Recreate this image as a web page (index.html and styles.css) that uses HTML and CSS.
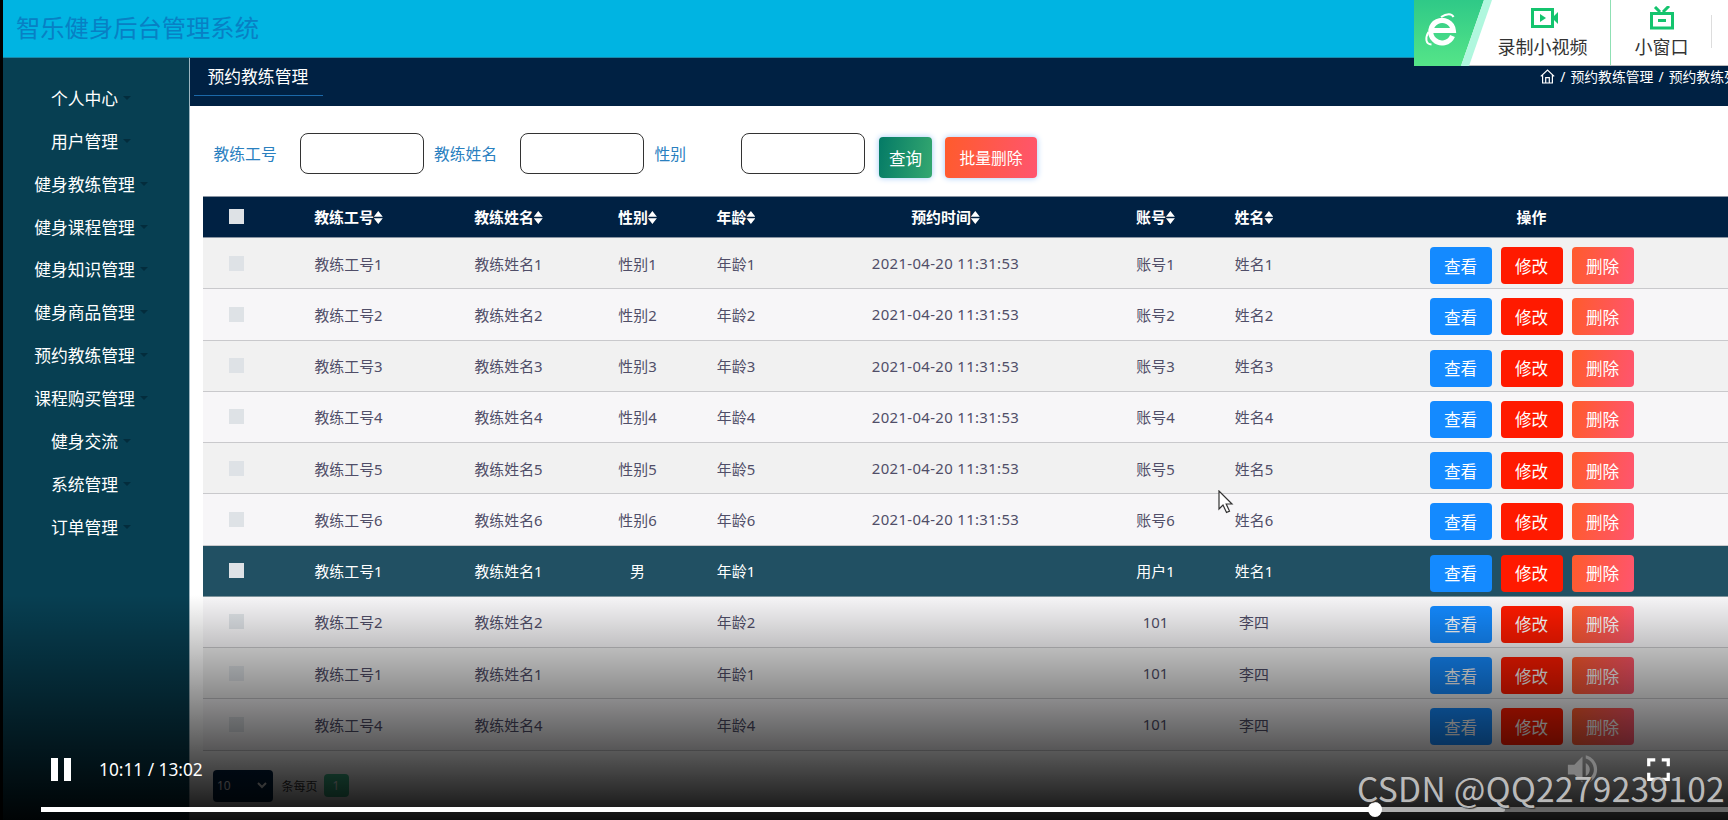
FILE: index.html
```html
<!DOCTYPE html>
<html lang="zh-CN">
<head>
    <meta charset="UTF-8">
    <title>智乐健身后台管理系统</title>
    <link rel="stylesheet" href="styles.css">
</head>
<body>
    <header class="navbar">智乐健身后台管理系统</header>

    <div class="wrapper">
        <nav class="sidebar">
            <a class="menu-item">个人中心</a>
            <a class="menu-item">用户管理</a>
            <a class="menu-item">健身教练管理</a>
            <a class="menu-item">健身课程管理</a>
            <a class="menu-item">健身知识管理</a>
            <a class="menu-item">健身商品管理</a>
            <a class="menu-item">预约教练管理</a>
            <a class="menu-item">课程购买管理</a>
            <a class="menu-item">健身交流</a>
            <a class="menu-item">系统管理</a>
            <a class="menu-item">订单管理</a>
        </nav>

        <main class="content">
            <div class="page-title">
                <h3>预约教练管理</h3>
                <div class="breadcrumb">
                    <svg width="15" height="15" viewBox="0 0 15 15" fill="none" stroke="#fff" stroke-width="1.2"><path d="M.8 7.4 7.5 1l6.7 6.4M2.6 6v8h9.8V6M5.7 14V8.6h3.6V14"/></svg>
                    <span class="sep">/</span><span>预约教练管理</span><span class="sep">/</span><span>预约教练列表</span>
                </div>
            </div>

            <div class="search-form">
                <label>教练工号</label><input type="text">
                <label>教练姓名</label><input type="text">
                <label>性别</label><input type="text">
                <button class="btn-search">查询</button>
                <button class="btn-batch">批量删除</button>
            </div>

            <table class="data-table">
                <colgroup>
                    <col class="c-check"><col class="c-no"><col class="c-name"><col class="c-sex"><col class="c-age">
                    <col class="c-time"><col class="c-account"><col class="c-user"><col class="c-action">
                </colgroup>
                <thead>
                    <tr>
                        <th><i class="check"></i></th>
                        <th class="sort">教练工号</th>
                        <th class="sort">教练姓名</th>
                        <th class="sort">性别</th>
                        <th class="sort">年龄</th>
                        <th class="sort">预约时间</th>
                        <th class="sort">账号</th>
                        <th class="sort">姓名</th>
                        <th>操作</th>
                    </tr>
                </thead>
                <tbody id="tableBody"></tbody>
            </table>

            <div class="pager">
                <div class="page-size">10
                    <svg width="10" height="7" viewBox="0 0 10 7" fill="none" stroke="#fff" stroke-width="2"><path d="M1 1l4 4 4-4"/></svg>
                </div>
                <span>条每页</span>
                <b class="page-num">1</b>
            </div>
        </main>
    </div>

    <!-- 浏览器录制工具条 -->
    <div class="recorder">
        <svg class="brand" width="80" height="66" viewBox="0 0 80 66">
            <defs>
                <linearGradient id="g" x1="0" y1="0" x2="0" y2="1"><stop offset="0" stop-color="#2fc987"/><stop offset="1" stop-color="#55e588"/></linearGradient>
            </defs>
            <path d="M0 0h70L47 66H0z" fill="url(#g)"/>
            <path d="M70 0h8L55 66h-8z" fill="#b0f7de"/>
            <path d="M38.500 36A11.300 11.300 0 1 1 39.300 30.500H18" fill="none" stroke="#fff" stroke-width="5.200"/>
            <path d="M27 17c6-4 11-3.500 12.500 0M14.500 32c-3.500 6-3 12 3 12.500" fill="none" stroke="#fff" stroke-width="2"/>
        </svg>
        <div class="tool tool-video">
            <svg width="28" height="20" viewBox="0 0 28 20"><path d="M1.500 1.500h20v17h-20z" fill="none" stroke="#14c46e" stroke-width="3"/><path d="M9 6v8l6-4zM23 8l4-4v12l-4-4z" fill="#14c46e"/></svg>
            <span>录制小视频</span>
        </div>
        <div class="tool tool-window">
            <svg width="26" height="24" viewBox="0 0 26 24" fill="none" stroke="#14c46e" stroke-width="3"><path d="M2.500 7.500h21v14.500h-21zM9 14.500h8M6 1l5 5M20 0l-6 6"/></svg>
            <span>小窗口</span>
        </div>
    </div>

    <svg class="cursor" width="16" height="24" viewBox="0 0 16 24"><path d="M1 1v18l4-4 3.500 7.500 3-1.400L8.200 14H14z" fill="#fff" stroke="#333" stroke-width="1.200"/></svg>

    <!-- 播放器控制栏 -->
    <div class="player">
        <div class="controls">
            <i class="pause"></i>
            <span class="time">10:11 / 13:02</span>
            <svg class="volume" width="39" height="39" viewBox="0 0 24 24" fill="#808080"><path d="M3 9v6h4l5 5V4L7 9H3zm13.500 3c0-1.770-1.020-3.290-2.500-4.030v8.050c1.480-.73 2.500-2.250 2.500-4.020zM14 3.230v2.060c2.890.86 5 3.540 5 6.710s-2.110 5.850-5 6.710v2.060c4.010-.91 7-4.490 7-8.770s-2.990-7.860-7-8.770z"/></svg>
            <svg class="full" width="39" height="39" viewBox="0 0 24 24" fill="#fff"><path d="M7 14H5v5h5v-2H7v-3zm-2-4h2V7h3V5H5v5zm12 7h-3v2h5v-5h-2v3zM14 5v2h3v3h2V5h-5z"/></svg>
        </div>
        <div class="progress"><div class="played"></div><div class="buffered"></div></div>
    </div>
    <div class="watermark">CSDN @QQ2279239102</div>

    <script>
        const time = '2021-04-20 11:31:53';
        const rows = [
            ['教练工号1', '教练姓名1', '性别1', '年龄1', time, '账号1', '姓名1'],
            ['教练工号2', '教练姓名2', '性别2', '年龄2', time, '账号2', '姓名2'],
            ['教练工号3', '教练姓名3', '性别3', '年龄3', time, '账号3', '姓名3'],
            ['教练工号4', '教练姓名4', '性别4', '年龄4', time, '账号4', '姓名4'],
            ['教练工号5', '教练姓名5', '性别5', '年龄5', time, '账号5', '姓名5'],
            ['教练工号6', '教练姓名6', '性别6', '年龄6', time, '账号6', '姓名6'],
            ['教练工号1', '教练姓名1', '男', '年龄1', '', '用户1', '姓名1'],
            ['教练工号2', '教练姓名2', '', '年龄2', '', '101', '李四'],
            ['教练工号1', '教练姓名1', '', '年龄1', '', '101', '李四'],
            ['教练工号4', '教练姓名4', '', '年龄4', '', '101', '李四']
        ];

        document.getElementById('tableBody').innerHTML = rows.map((row, i) => `
            <tr class="${i === 6 ? 'active' : ''}">
                <td><i class="check"></i></td>
                ${row.map(cell => `<td>${cell}</td>`).join('')}
                <td>
                    <div class="actions">
                        <button class="btn-view">查看</button>
                        <button class="btn-edit">修改</button>
                        <button class="btn-delete">删除</button>
                    </div>
                </td>
            </tr>
        `).join('');
    </script>
</body>
</html>
```
FILE: styles.css
```css
* {
    box-sizing: border-box;
}
body {
    margin: 0;
    width: 1728px;
    height: 820px;
    overflow: hidden;
    position: relative;
    border-left: 3px solid #000;
    background-color: #fff;
    font-family: "Noto Sans", "Noto Sans CJK SC", sans-serif;
    color: #504e68;
}
button {
    border: none;
    padding: 0;
    font-family: inherit;
    color: #fff;
}
.navbar {
    height: 58px;
    padding-left: 13px;
    line-height: 56px;
    font-size: 24.3px;
    color: #0880c4;
    background-color: #00b4e2;
    border-bottom: 1px solid #1b87a8;
}
.wrapper {
    display: flex;
    height: 762px;
}
.sidebar {
    width: 187px;
    flex-shrink: 0;
    padding: 18.5px 10px 0 0;
    background-color: #073f52;
    border-right: 1px solid #9db6c0;
}
.menu-item {
    display: flex;
    align-items: center;
    justify-content: center;
    height: 42.87px;
    font-size: 16.8px;
    color: #fff;
}
.menu-item::after {
    content: "";
    margin-left: 5px;
    border: 4.500px solid transparent;
    border-top-color: #032c3c;
    border-bottom: 0;
}
.content {
    flex: 1;
    min-width: 0;
    overflow: hidden;
}
.page-title {
    display: flex;
    justify-content: space-between;
    height: 48px;
    padding-left: 4px;
    background-color: #002143;
    color: #fff;
}
.page-title h3 {
    width: 129px;
    height: 38px;
    margin: 0;
    padding-left: 13.500px;
    line-height: 38px;
    font-size: 16.8px;
    font-weight: normal;
    border-bottom: 1px solid #1b68a8;
}
.breadcrumb {
    display: flex;
    align-items: center;
    width: 188px;
    height: 36px;
    font-size: 13.8px;
    white-space: nowrap;
}
.breadcrumb .sep {
    width: 15.500px;
    text-align: center;
    flex-shrink: 0;
}
.breadcrumb svg {
    flex-shrink: 0;
}
.search-form {
    display: flex;
    align-items: center;
    height: 90px;
    padding: 5px 0 0 23.500px;
}
.search-form label {
    width: 86px;
    font-size: 15.8px;
    color: #2a80bf;
}
.search-form input {
    width: 124px;
    height: 41px;
    margin-right: 10.500px;
    border: 1px solid #333;
    border-radius: 8px;
}
.search-form button {
    height: 41px;
    margin-top: 8px;
    border-radius: 4px;
    box-shadow: 0 0 6px #a0c8f8;
}
.btn-search {
    width: 53px;
    margin-left: 4px;
    font-size: 16.5px;
    background: linear-gradient(100deg, #047a66, #35a870);
}
.search-form .btn-batch {
    width: 92px;
    margin-left: 13px;
    font-size: 15.8px;
}
.btn-batch, .btn-delete {
    background: linear-gradient(100deg, #ff5b2c, #ff556f);
}
.data-table {
    width: 1559px;
    margin-left: 13px;
    table-layout: fixed;
    border-collapse: separate;
    border-spacing: 0;
    font-size: 14.9px;
    text-align: center;
}
.c-check { width: 67px; }
.c-no { width: 157px; }
.c-name { width: 163px; }
.c-sex { width: 95px; }
.c-age { width: 102px; }
.c-time { width: 317px; }
.c-account { width: 103px; }
.c-user { width: 94px; }
.c-action { width: 461px; }
th, td {
    padding: 0;
    white-space: nowrap;
}
th {
    height: 42px;
    padding-bottom: 2px;
    color: #fff;
    background-color: #002143;
    border-top: 1px solid #8994a2;
    border-bottom: 1px solid #8994a2;
}
.sort::after {
    content: "";
    display: inline-block;
    width: 9px;
    height: 13px;
    vertical-align: -1.500px;
    background-color: #fff;
    clip-path: polygon(50% 0, 100% 44%, 0 44%, 0 56%, 100% 56%, 50% 100%, 0 56%, 0 44%);
}
td {
    height: 51.25px;
    background-color: #f1f1f1;
    border-bottom: 1px solid #c9c9cc;
}
td:nth-child(6) {
    letter-spacing: 0.35px;
}
tr:nth-child(even) td {
    background-color: #f7f6f8;
}
tr.active td {
    background-color: #215063;
    border-bottom-color: #7d949c;
    color: #fff;
}
.check {
    display: block;
    width: 15px;
    height: 15px;
    margin: 0 auto;
    background-color: #dee2e6;
}
.actions {
    display: flex;
    justify-content: center;
    gap: 9px;
    padding-top: 5px;
}
.actions button {
    width: 62px;
    height: 37px;
    border-radius: 4px;
    font-size: 16.6px;
}
.btn-view {
    background-color: #148aff;
}
.btn-edit {
    background-color: #ff1a00;
}
.pager {
    display: flex;
    align-items: center;
    padding: 19px 0 0 23px;
    font-size: 12px;
    color: #333;
}
.page-size {
    display: flex;
    align-items: center;
    justify-content: space-between;
    width: 60px;
    height: 32px;
    margin-right: 8.500px;
    padding: 0 6px 0 4px;
    border-radius: 4px;
    color: #fff;
    background-color: #002143;
}
.page-num {
    width: 25px;
    height: 23px;
    margin-left: 6px;
    line-height: 23px;
    border-radius: 4px;
    text-align: center;
    font-weight: normal;
    color: #fff;
    background-color: #40c090;
}
.recorder {
    position: absolute;
    top: 0;
    right: 0;
    display: flex;
    width: 314px;
    height: 66px;
    background-color: #fff;
    border-bottom: 1px solid #bbb;
    color: #333;
}
.tool {
    display: flex;
    flex-direction: column;
    align-items: center;
    justify-content: space-between;
    font-size: 18px;
    line-height: 26px;
    padding-bottom: 5px;
}
.tool-video {
    width: 117px;
    padding-top: 8px;
    border-right: 1px solid #8fe0b4;
}
.tool-video span {
    margin-left: -19px;
}
.tool-video svg {
    margin-left: -15px;
}
.tool-window {
    width: 101px;
    padding-top: 6px;
    background: linear-gradient(#ddd, #ddd) 100% 15px / 1px 33px no-repeat;
}
.cursor {
    position: absolute;
    left: 1215px;
    top: 490px;
}
.player {
    position: absolute;
    left: -3px;
    right: 0;
    bottom: 0;
    height: 230px;
    padding-top: 160px;
    background: linear-gradient(rgba(0, 0, 0, 0) 5px, rgba(0, 0, 0, 0.940));
}
.controls {
    display: flex;
    align-items: center;
    height: 39px;
    padding: 0 50px 0 51px;
    color: #fff;
}
.pause {
    width: 20px;
    height: 23px;
    margin-right: 28px;
    border: solid #fff;
    border-width: 0 7px;
}
.time {
    font-size: 17.3px;
}
.volume {
    margin-left: auto;
    margin-right: 37px;
}
.progress {
    display: flex;
    height: 5px;
    margin: 18px 0 0 41px;
    background-color: #666;
}
.played {
    position: relative;
    width: 1334px;
    background-color: #fff;
}
.played::after {
    content: "";
    position: absolute;
    right: -7px;
    top: -5px;
    width: 14px;
    height: 15px;
    border-radius: 50%;
    background-color: #fff;
}
.buffered {
    width: 130px;
    border-radius: 0 3px 3px 0;
    background-color: #b0b0b0;
}
.watermark {
    position: absolute;
    right: 3px;
    top: 764px;
    font: 33.5px/48px "Noto Sans CJK SC", sans-serif;
    letter-spacing: 0.3px;
    color: rgba(200, 200, 200, 0.930);
    text-shadow: 1px 1px 1px #333;
}
```
